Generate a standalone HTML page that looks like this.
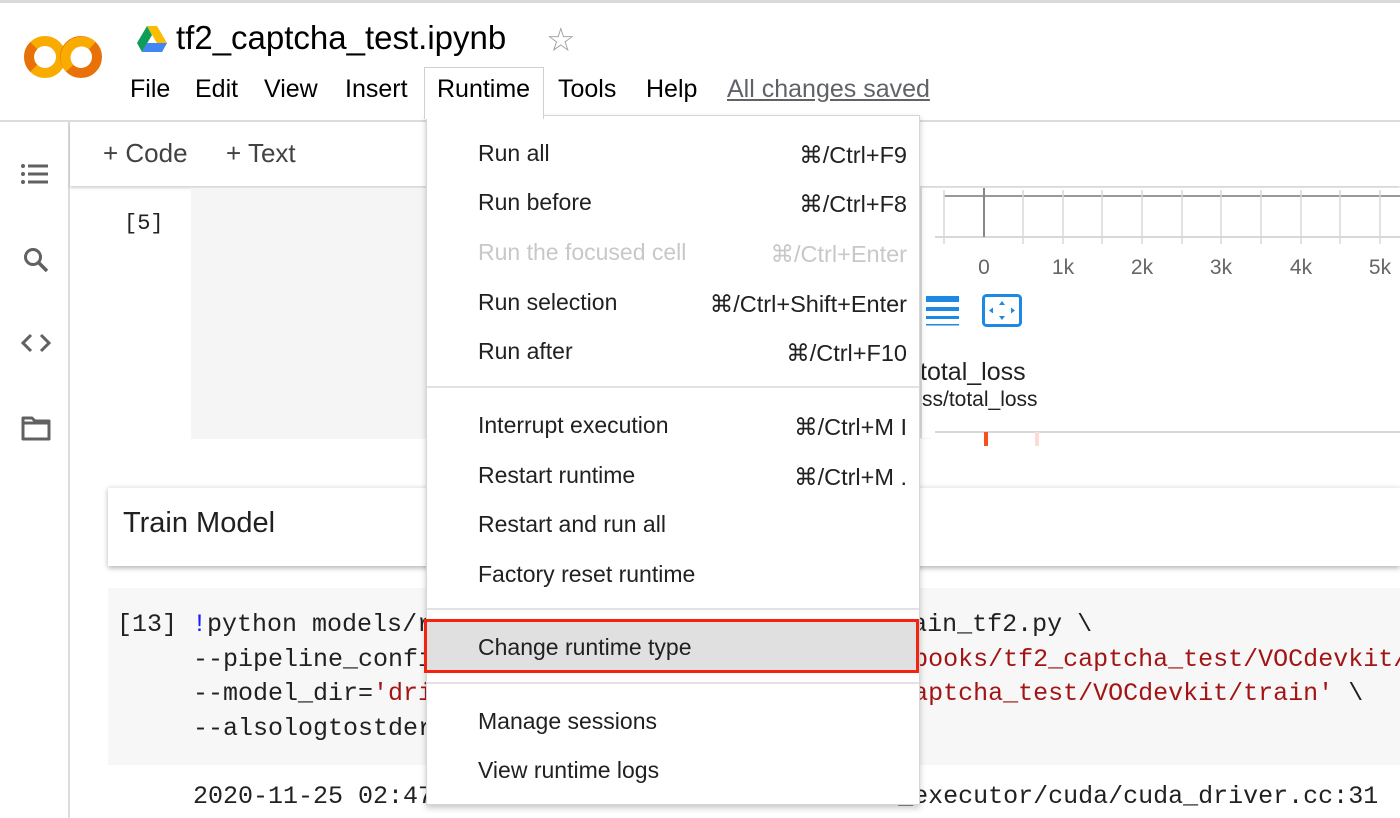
<!DOCTYPE html>
<html><head><meta charset="utf-8"><style>
*{margin:0;padding:0;box-sizing:border-box}
body{width:1400px;height:818px;overflow:hidden;background:#fff;font-family:"Liberation Sans",sans-serif;color:#212121;position:relative}
.a{position:absolute;white-space:nowrap}
.mono{font-family:"Liberation Mono",monospace;font-size:25px;color:#212121}
.mi{position:absolute;left:51px;font-size:23px;color:#212121;white-space:nowrap}
.sc{position:absolute;right:12px;font-size:23.5px;color:#212121;white-space:nowrap}
.dis{color:#c8c8c8}
.sep{position:absolute;left:0;right:0;height:2px;background:#e2e2e2}
</style></head><body>
<div class="a" style="left:0;top:0;width:1400px;height:3px;background:#dadada"></div>
<svg class="a" style="left:24px;top:34px" width="78" height="46" viewBox="0 0 78 46">
<circle cx="21" cy="23" r="16" fill="none" stroke="#f9ab00" stroke-width="10"/>
<path d="M9.7 34.3 A16 16 0 0 1 9.7 11.7" fill="none" stroke="#e8710a" stroke-width="10"/>
<circle cx="57" cy="23" r="16" fill="none" stroke="#e8710a" stroke-width="10"/>
<path d="M45.7 34.3 A16 16 0 0 1 68.3 11.7" fill="none" stroke="#f9ab00" stroke-width="10"/>
</svg>
<svg class="a" style="left:137px;top:26px" width="30" height="26" viewBox="0 0 30 26">
<polygon points="10,0 20,0 30,17 25,26" fill="#fbbc04"/>
<polygon points="10,0 0,17 5,26 15,9" fill="#0f9d58"/>
<polygon points="5,26 25,26 30,17 10,17" fill="#4285f4"/>
</svg>
<div class="a" style="left:176px;top:19px;font-size:33px;color:#000">tf2_captcha_test.ipynb</div>
<div class="a" style="left:546px;top:20px;font-size:33px;color:#9e9e9e">☆</div>
<div class="a" style="left:130px;top:75px;font-size:25px;color:#000">File</div>
<div class="a" style="left:195px;top:75px;font-size:25px;color:#000">Edit</div>
<div class="a" style="left:264px;top:75px;font-size:25px;color:#000">View</div>
<div class="a" style="left:345px;top:75px;font-size:25px;color:#000">Insert</div>
<div class="a" style="left:424px;top:67px;width:120px;height:52px;border:1px solid #d0d0d0;border-bottom:none;background:#fff;z-index:6"></div>
<div class="a" style="left:437px;top:75px;font-size:25px;color:#000;z-index:7">Runtime</div>
<div class="a" style="left:558px;top:75px;font-size:25px;color:#000">Tools</div>
<div class="a" style="left:646px;top:75px;font-size:25px;color:#000">Help</div>
<div class="a" style="left:727px;top:75px;font-size:25px;color:#5f6368;text-decoration:underline">All changes saved</div>
<div class="a" style="left:0;top:120px;width:1400px;height:2px;background:#dcdcdc"></div>
<div class="a" style="left:68px;top:122px;width:2px;height:696px;background:#dcdcdc"></div>
<svg class="a" style="left:20px;top:162px" width="30" height="26" viewBox="0 0 30 26"><g fill="#616161"><circle cx="3" cy="4" r="2"/><circle cx="3" cy="12" r="2"/><circle cx="3" cy="20" r="2"/><rect x="8" y="2.5" width="20" height="3"/><rect x="8" y="10.5" width="20" height="3"/><rect x="8" y="18.5" width="20" height="3"/></g></svg>
<svg class="a" style="left:22px;top:246px" width="28" height="28" viewBox="0 0 28 28"><circle cx="11" cy="11" r="7.5" fill="none" stroke="#616161" stroke-width="3"/><path d="M16.5 16.5 L25 25" stroke="#616161" stroke-width="3.5"/></svg>
<svg class="a" style="left:20px;top:332px" width="32" height="22" viewBox="0 0 32 22"><path d="M11 3 L3 11 L11 19 M21 3 L29 11 L21 19" fill="none" stroke="#616161" stroke-width="3"/></svg>
<svg class="a" style="left:20px;top:414px" width="32" height="28" viewBox="0 0 32 28"><path d="M3 4 H12 L15 7 H29 V25 H3 Z M3 9 H29" fill="none" stroke="#616161" stroke-width="3" stroke-linejoin="round"/></svg>
<div class="a" style="left:70px;top:122px;width:1330px;height:64px;background:#fff;box-shadow:0 2px 3px rgba(0,0,0,.18)"></div>
<div class="a" style="left:103px;top:138px;font-size:26px;color:#424242">+ Code</div>
<div class="a" style="left:226px;top:138px;font-size:26px;color:#424242">+ Text</div>
<div class="a" style="left:124px;top:211px;font-family:'Liberation Mono',monospace;font-size:22px;color:#212121">[5]</div>
<div class="a" style="left:191px;top:188px;width:740px;height:251px;background:#f5f5f5"></div>
<div class="a" style="left:920px;top:188px;width:480px;height:250px;background:#fff;border-left:2px solid #e0e0e0"></div>
<svg class="a" style="left:922px;top:186px" width="478" height="260" viewBox="0 0 478 260">
<g stroke="#d8d8d8" stroke-width="1.5">
<line x1="22" y1="10" x2="478" y2="10" stroke="#999" stroke-width="2"/>
<line x1="13" y1="51" x2="478" y2="51" stroke="#ccc"/>
<line x1="22" y1="4" x2="22" y2="58"/><line x1="101" y1="4" x2="101" y2="58"/><line x1="141" y1="4" x2="141" y2="58"/><line x1="180" y1="4" x2="180" y2="58"/><line x1="220" y1="4" x2="220" y2="58"/><line x1="260" y1="4" x2="260" y2="58"/><line x1="299" y1="4" x2="299" y2="58"/><line x1="339" y1="4" x2="339" y2="58"/><line x1="379" y1="4" x2="379" y2="58"/><line x1="418" y1="4" x2="418" y2="58"/><line x1="458" y1="4" x2="458" y2="58"/>
<line x1="13" y1="246" x2="478" y2="246" stroke="#ccc"/>
</g>
<line x1="62" y1="2" x2="62" y2="51" stroke="#888" stroke-width="2"/>
<rect x="62" y="246" width="4" height="14" fill="#f4511e"/><rect x="113" y="246" width="4" height="14" fill="#fcdcd4"/>
<g font-family="Liberation Sans" font-size="21" fill="#666" text-anchor="middle"><text x="62" y="88">0</text><text x="141" y="88">1k</text><text x="220" y="88">2k</text><text x="299" y="88">3k</text><text x="379" y="88">4k</text><text x="458" y="88">5k</text></g>
<g fill="#1e88e5"><rect x="4" y="110" width="33" height="6"/><rect x="4" y="121" width="33" height="4"/><rect x="4" y="130" width="33" height="3"/><rect x="4" y="138" width="33" height="1.5"/></g>
<rect x="61.5" y="109.5" width="37" height="30" rx="3" fill="none" stroke="#1e88e5" stroke-width="3"/>
<g fill="#1e88e5"><polygon points="80,115 77,119 83,119"/><polygon points="80,134 77,130 83,130"/><polygon points="67,124.5 71,121.5 71,127.5"/><polygon points="93,124.5 89,121.5 89,127.5"/></g>
<text x="-2" y="194" font-family="Liberation Sans" font-size="25" fill="#212121">total_loss</text>
<text x="0" y="220" font-family="Liberation Sans" font-size="21" fill="#212121">ss/total_loss</text>
</svg>
<div class="a" style="left:108px;top:487px;width:1292px;height:79px;background:#fff;box-shadow:0 2px 5px rgba(0,0,0,.3);border-top:1px solid #eee"></div>
<div class="a" style="left:123px;top:507px;font-size:29px;color:#212121">Train Model</div>
<div class="a" style="left:108px;top:588px;width:1292px;height:177px;background:#f7f7f7"></div>
<div class="a mono" style="left:117px;top:610px;">[13] <span style="color:#1a1aff">!</span>python models/research/object_detection/model_main_tf2.py \</div>
<div class="a mono" style="left:193px;top:645px;">--pipeline_config_path=<span style="color:#a31515">'drive/MyDrive/Colab Notebooks/tf2_captcha_test/VOCdevkit/</span></div>
<div class="a mono" style="left:193px;top:679px;">--model_dir=<span style="color:#a31515">'drive/MyDrive/Colab Notebooks/tf2_captcha_test/VOCdevkit/train'</span> \</div>
<div class="a mono" style="left:193px;top:714px;">--alsologtostderr</div>
<div class="a mono" style="left:193px;top:782px;">2020-11-25 02:47:12.381234: I tensorflow/stream_executor/cuda/cuda_driver.cc:31</div>
<div class="a" style="left:426px;top:115px;width:494px;height:690px;background:#fff;border:1px solid #d6d6d6;box-shadow:0 3px 6px rgba(0,0,0,.22);z-index:5">
<div class="mi" style="top:24px">Run all</div><div class="sc" style="top:25px">⌘/Ctrl+F9</div>
<div class="mi" style="top:73px">Run before</div><div class="sc" style="top:74px">⌘/Ctrl+F8</div>
<div class="mi dis" style="top:123px">Run the focused cell</div><div class="sc dis" style="top:124px">⌘/Ctrl+Enter</div>
<div class="mi" style="top:173px">Run selection</div><div class="sc" style="top:174px">⌘/Ctrl+Shift+Enter</div>
<div class="mi" style="top:222px">Run after</div><div class="sc" style="top:223px">⌘/Ctrl+F10</div>
<div class="sep" style="top:270px"></div>
<div class="mi" style="top:296px">Interrupt execution</div><div class="sc" style="top:297px">⌘/Ctrl+M I</div>
<div class="mi" style="top:346px">Restart runtime</div><div class="sc" style="top:347px">⌘/Ctrl+M .</div>
<div class="mi" style="top:395px">Restart and run all</div>
<div class="mi" style="top:445px">Factory reset runtime</div>
<div class="sep" style="top:492px"></div>
<div style="position:absolute;left:-3px;top:503px;width:495px;height:54px;background:#e0e0e0;border:3px solid #f4230f"></div>
<div class="mi" style="top:518px">Change runtime type</div>
<div class="sep" style="top:566px"></div>
<div class="mi" style="top:592px">Manage sessions</div>
<div class="mi" style="top:641px">View runtime logs</div>
</div>
</body></html>
